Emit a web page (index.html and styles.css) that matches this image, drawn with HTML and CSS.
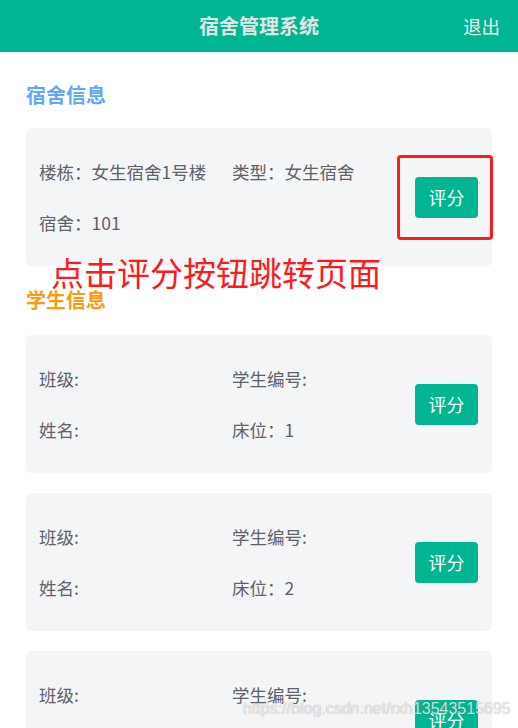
FILE: index.html
```html
<!DOCTYPE html>
<html lang="zh">
<head>
<meta charset="utf-8">
<title>宿舍管理系统</title>
<link rel="stylesheet" href="styles.css">
</head>
<body>
<div class="page">
  <header class="topbar">
    <span></span>
    <h1 class="title">宿舍管理系统</h1>
    <a class="logout">退出</a>
  </header>

  <main class="content">
    <h2 class="section-title dorm">宿舍信息</h2>
    <div class="card">
      <div class="cell">楼栋：女生宿舍1号楼</div>
      <div class="cell">类型：女生宿舍</div>
      <div class="cell">宿舍：101</div>
      <div class="cell"></div>
      <button class="btn">评分</button>
    </div>

    <h2 class="section-title student">学生信息</h2>
    <div class="list">
      <div class="card">
        <div class="cell">班级:</div>
        <div class="cell">学生编号:</div>
        <div class="cell">姓名:</div>
        <div class="cell">床位：1</div>
        <button class="btn">评分</button>
      </div>
      <div class="card">
        <div class="cell">班级:</div>
        <div class="cell">学生编号:</div>
        <div class="cell">姓名:</div>
        <div class="cell">床位：2</div>
        <button class="btn">评分</button>
      </div>
      <div class="card">
        <div class="cell">班级:</div>
        <div class="cell">学生编号:</div>
        <div class="cell">姓名:</div>
        <div class="cell">床位：3</div>
        <button class="btn">评分</button>
      </div>
    </div>
  </main>

  <div class="mark-box"></div>
  <div class="mark-text">点击评分按钮跳转页面</div>
  <div class="watermark">https://blog.csdn.net/rxh13543515695</div>
</div>
</body>
</html>
```

FILE: styles.css
```css
html, body {
  margin: 0;
  padding: 0;
  background: #ffffff;
}

body {
  font-family: "Noto Sans CJK SC", "Noto Sans", sans-serif;
  overflow: hidden;
}

.page {
  position: relative;
  width: 518px;
  height: 728px;
  overflow: hidden;
}

.topbar {
  height: 52px;
  background: #00b592;
  display: grid;
  grid-template-columns: 1fr auto 1fr;
  align-items: center;
  padding: 0 18px 0 0;
}

.title {
  margin: 0;
  font-size: 20px;
  font-weight: 700;
  color: #e4e4e4;
  line-height: 52px;
  padding-left: 18px;
}

.logout {
  justify-self: end;
  font-size: 18.5px;
  color: #ececec;
  line-height: 52px;
}

.content {
  padding: 0 26px;
}

.section-title {
  margin: 0;
  font-size: 20px;
  line-height: 20px;
  font-weight: 700;
}

.section-title.dorm {
  color: #62a8f7;
  margin: 33px 0 23px;
}

.section-title.student {
  color: #ff9a0c;
  margin: 24px 0 25px;
}

.list {
  display: flex;
  flex-direction: column;
  gap: 20px;
}

.card {
  background: #f4f5f7;
  border-radius: 5px;
  padding: 18px 14px 18px 13px;
  display: grid;
  grid-template-columns: 193px 1fr 63px;
  grid-template-rows: 51px 51px;
  align-items: center;
}

.cell {
  font-size: 17.5px;
  color: #606266;
  line-height: 51px;
  white-space: nowrap;
}

.btn {
  grid-column: 3;
  grid-row: 1 / span 2;
  align-self: center;
  width: 63px;
  height: 41px;
  border: none;
  border-radius: 4px;
  background: #00b592;
  color: #ffffff;
  font-family: "Noto Sans CJK SC", sans-serif;
  font-size: 18px;
  padding: 0;
}

.mark-box {
  position: absolute;
  left: 397px;
  top: 155px;
  width: 90px;
  height: 79px;
  border: 3px solid #ff1a1a;
  border-radius: 4px;
}

.mark-text {
  position: absolute;
  left: 51px;
  top: 254px;
  font-size: 33px;
  line-height: 36px;
  color: #ff1a1a;
  white-space: nowrap;
}

.watermark {
  position: absolute;
  left: 243px;
  top: 700px;
  font-family: "Liberation Sans", Arial, sans-serif;
  font-size: 16px;
  color: rgba(255, 255, 255, 0.75);
  text-shadow: 0 0 1px rgba(90, 90, 90, 0.6);
  white-space: nowrap;
}
```
